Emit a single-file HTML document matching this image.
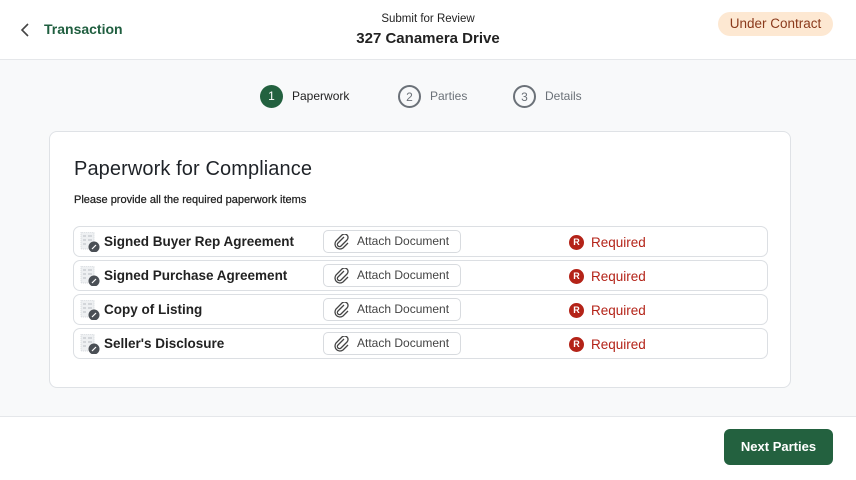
<!DOCTYPE html>
<html><head><style>
*{box-sizing:border-box;margin:0;padding:0}
body{width:856px;height:480px;font-family:"Liberation Sans",sans-serif;background:#f8f9fa;position:relative;overflow:hidden;color:#1f2328}
.hdr{position:absolute;left:0;top:0;width:856px;height:60px;background:#fff;border-bottom:1px solid #e5e7ea}
.back{position:absolute;left:20px;top:21px;font-size:14px;color:#1f5e3f;font-weight:bold}
.back svg{position:absolute;left:0;top:2px}
.back span{position:absolute;left:24px;top:0;white-space:nowrap}
.t1{position:absolute;left:0;width:856px;text-align:center;top:13px;font-size:11.5px;color:#222}
.t2{position:absolute;left:0;width:856px;text-align:center;top:30px;font-size:15px;font-weight:bold;color:#222}
.badge{position:absolute;left:718px;top:12px;width:115px;height:24px;border-radius:12px;background:#fde8d2;color:#8a3a1c;font-size:13.5px;text-align:center;line-height:24px}
.step{position:absolute;top:85px;height:23px;font-size:12px;line-height:23px}
.step i{position:absolute;left:0;top:0;width:23px;height:23px;border-radius:50%;font-style:normal;text-align:center;line-height:21px;font-size:12px}
.step b{position:absolute;left:32px;top:0;white-space:nowrap;font-weight:normal}
.card{position:absolute;left:49px;top:131px;width:742px;height:257px;background:#fff;border:1px solid #dfe2e6;border-radius:8px}
h1{position:absolute;left:74px;top:158px;font-size:20px;font-weight:normal;color:#1f2328;letter-spacing:.1px}
.sub{position:absolute;left:74px;top:194px;font-size:11px;color:#222;-webkit-text-stroke:0.25px #222}
.row{position:absolute;left:73px;width:695px;height:31px;border:1px solid #dcdfe3;border-radius:7px;background:#fff}
.row .nm{position:absolute;left:30px;top:7px;font-size:13.5px;font-weight:bold;color:#222;white-space:nowrap}
.row .ic{position:absolute;left:6px;top:5px}
.att{position:absolute;left:249px;top:3px;width:138px;height:23px;border:1px solid #d8dbdf;border-radius:5px;font-size:12px;color:#444;line-height:21px}
.att svg{position:absolute;left:9px;top:3px}
.att span{position:absolute;left:33px;top:0;white-space:nowrap}
.req{position:absolute;left:495px;top:7px;height:17px;color:#b42318;font-size:13.5px;white-space:nowrap;display:flex;align-items:center}
.req i{display:block;width:15px;height:15px;border-radius:50%;background:#b42318;color:#fff;font-style:normal;font-size:9px;font-weight:bold;text-align:center;line-height:15px;margin-right:7px}
.foot{position:absolute;left:0;top:416px;width:856px;height:64px;background:#fff;border-top:1px solid #e5e7ea}
.btn{position:absolute;left:724px;top:429px;width:109px;height:36px;background:#23613f;color:#fff;border-radius:6px;font-size:13px;font-weight:bold;text-align:center;line-height:36px}
</style></head><body>
<div class="hdr">
<div class="back"><svg width="12" height="14" viewBox="0 0 12 14"><path d="M8 1L2 7l6 6" fill="none" stroke="#444" stroke-width="1.6"/></svg><span>Transaction</span></div>
<div class="t1">Submit for Review</div>
<div class="t2">327 Canamera Drive</div>
<div class="badge">Under Contract</div>
</div>
<div class="step" style="left:260px"><i style="background:#23613f;color:#fff;line-height:23px">1</i><b style="color:#222">Paperwork</b></div>
<div class="step" style="left:398px"><i style="border:2px solid #6b7178;color:#6b7178">2</i><b style="color:#6b7178">Parties</b></div>
<div class="step" style="left:513px"><i style="border:2px solid #6b7178;color:#6b7178">3</i><b style="color:#6b7178">Details</b></div>
<div class="card"></div>
<h1>Paperwork for Compliance</h1>
<div class="sub">Please provide all the required paperwork items</div>

<div class="row" style="top:226px"><svg class="ic" width="20" height="20" viewBox="0 0 20 20"><rect x="1" y="0" width="13" height="17" rx="1" fill="#eef0f2" stroke="#d0d4d8" stroke-dasharray="1 1"/><path d="M3 4h3M8 4h4M3 8h3M8 8h4M3 12h3" stroke="#b8bcc1"/><circle cx="14" cy="15" r="5.5" fill="#4a4f55"/><path d="M12 17l4-4" stroke="#fff" stroke-width="1.2"/></svg><span class="nm">Signed Buyer Rep Agreement</span><div class="att"><svg width="18" height="16" viewBox="0 0 18 16"><path d="M11 3L5 9a2 2 0 003 3l6-6a3.5 3.5 0 00-5-5L3 7a5 5 0 007 7l5-5" fill="none" stroke="#444" stroke-width="1.3"/></svg><span>Attach Document</span></div><div class="req"><i>R</i>Required</div></div>
<div class="row" style="top:260px"><svg class="ic" width="20" height="20" viewBox="0 0 20 20"><rect x="1" y="0" width="13" height="17" rx="1" fill="#eef0f2" stroke="#d0d4d8" stroke-dasharray="1 1"/><path d="M3 4h3M8 4h4M3 8h3M8 8h4M3 12h3" stroke="#b8bcc1"/><circle cx="14" cy="15" r="5.5" fill="#4a4f55"/><path d="M12 17l4-4" stroke="#fff" stroke-width="1.2"/></svg><span class="nm">Signed Purchase Agreement</span><div class="att"><svg width="18" height="16" viewBox="0 0 18 16"><path d="M11 3L5 9a2 2 0 003 3l6-6a3.5 3.5 0 00-5-5L3 7a5 5 0 007 7l5-5" fill="none" stroke="#444" stroke-width="1.3"/></svg><span>Attach Document</span></div><div class="req"><i>R</i>Required</div></div>
<div class="row" style="top:294px"><svg class="ic" width="20" height="20" viewBox="0 0 20 20"><rect x="1" y="0" width="13" height="17" rx="1" fill="#eef0f2" stroke="#d0d4d8" stroke-dasharray="1 1"/><path d="M3 4h3M8 4h4M3 8h3M8 8h4M3 12h3" stroke="#b8bcc1"/><circle cx="14" cy="15" r="5.5" fill="#4a4f55"/><path d="M12 17l4-4" stroke="#fff" stroke-width="1.2"/></svg><span class="nm">Copy of Listing</span><div class="att"><svg width="18" height="16" viewBox="0 0 18 16"><path d="M11 3L5 9a2 2 0 003 3l6-6a3.5 3.5 0 00-5-5L3 7a5 5 0 007 7l5-5" fill="none" stroke="#444" stroke-width="1.3"/></svg><span>Attach Document</span></div><div class="req"><i>R</i>Required</div></div>
<div class="row" style="top:328px"><svg class="ic" width="20" height="20" viewBox="0 0 20 20"><rect x="1" y="0" width="13" height="17" rx="1" fill="#eef0f2" stroke="#d0d4d8" stroke-dasharray="1 1"/><path d="M3 4h3M8 4h4M3 8h3M8 8h4M3 12h3" stroke="#b8bcc1"/><circle cx="14" cy="15" r="5.5" fill="#4a4f55"/><path d="M12 17l4-4" stroke="#fff" stroke-width="1.2"/></svg><span class="nm">Seller's Disclosure</span><div class="att"><svg width="18" height="16" viewBox="0 0 18 16"><path d="M11 3L5 9a2 2 0 003 3l6-6a3.5 3.5 0 00-5-5L3 7a5 5 0 007 7l5-5" fill="none" stroke="#444" stroke-width="1.3"/></svg><span>Attach Document</span></div><div class="req"><i>R</i>Required</div></div>

<div class="foot"></div>
<div class="btn">Next Parties</div>
</body></html>
